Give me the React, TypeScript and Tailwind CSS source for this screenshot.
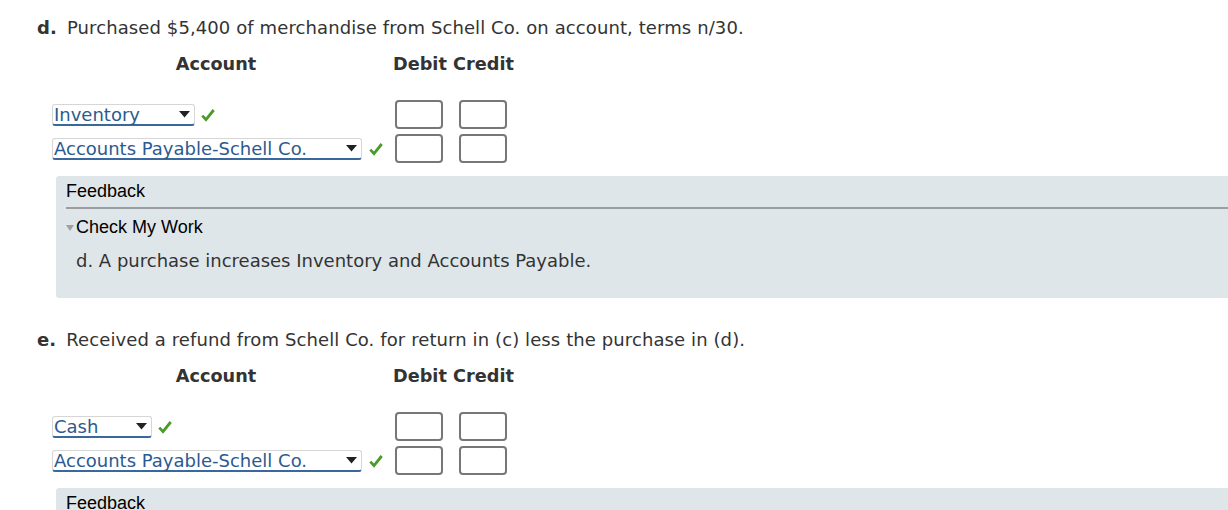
import React from "react";

const verdana = { fontFamily: '"DejaVu Sans", Verdana, sans-serif' };
const arial = { fontFamily: '"Liberation Sans", Arial, sans-serif' };

function Check() {
  return (
    <svg width="14" height="14" viewBox="0 0 14 14" className="shrink-0">
      <path d="M1.3 7.6 L5 11.6 L12.7 2" fill="none" stroke="#4c9a2a" strokeWidth="2.8" />
    </svg>
  );
}

function Select({ label, width }: { label: string; width: number }) {
  return (
    <div
      className="flex items-center justify-between h-[22px] border border-[#d6d6d6] border-b-2 border-b-[#3a679c] rounded-[3px] pl-[1px] pr-[4px] text-[#2c5a8f] text-[18px] leading-none"
      style={{ width }}
    >
      <span className="whitespace-nowrap mt-[1px]">{label}</span>
      <svg width="11" height="7" viewBox="0 0 11 7">
        <path d="M0 0 H11 L5.5 6.5 Z" fill="#222" />
      </svg>
    </div>
  );
}

function Box() {
  return <div className="w-[48px] h-[29px] border-2 border-[#777] rounded-[4px] bg-white" />;
}

function Row({ label, width, checkGap }: { label: string; width: number; checkGap: number }) {
  return (
    <div className="flex items-center h-[29px]">
      <div className="w-[343px] flex items-center">
        <Select label={label} width={width} />
        <div style={{ marginLeft: checkGap }}>
          <Check />
        </div>
      </div>
      <div className="flex gap-[16px]">
        <Box />
        <Box />
      </div>
    </div>
  );
}

function Section({
  letter,
  title,
  rows,
  feedback,
}: {
  letter: string;
  title: string;
  rows: { label: string; width: number; checkGap: number }[];
  feedback?: string;
}) {
  return (
    <div>
      <div
        className="mt-[1px] pl-[37px] h-[24px] leading-[24px] text-[18px] tracking-[0.1px] text-[#333] whitespace-nowrap"
        style={verdana}
      >
        <span className="font-bold">{letter}.</span>
        <span className="ml-[10px]">{title}</span>
      </div>
      <div className="flex mt-[12px] h-[24px] leading-[24px] text-[17.7px] font-bold text-[#333]" style={verdana}>
        <div className="w-[328px] ml-[52px] text-center">Account</div>
        <div className="ml-[13px]">Debit Credit</div>
      </div>
      <div className="ml-[52px] mt-[24px] flex flex-col gap-[5px]" style={verdana}>
        {rows.map((r) => (
          <Row key={r.label + r.width} {...r} />
        ))}
      </div>
      <div className="ml-[56px] mt-[13px] bg-[#dfe6e9] rounded-l-[3px] h-[122px] pt-[2px] text-black">
        <div
          className="ml-[10px] h-[31px] leading-[26px] text-[18px] border-b-2 border-b-[#9a9ea1]"
          style={arial}
        >
          Feedback
        </div>
        {feedback && (
          <>
            <div className="ml-[10px] mt-[6px] flex items-center h-[24px] text-[18px]" style={arial}>
              <svg width="8" height="6" viewBox="0 0 8 6" className="mr-[2px] mt-[1px]">
                <path d="M0 0 H8 L4 6 Z" fill="#a0a0a0" />
              </svg>
              <span>Check My Work</span>
            </div>
            <div
              className="ml-[20px] mt-[10px] h-[24px] leading-[24px] text-[18px] text-[#333] whitespace-nowrap"
              style={verdana}
            >
              {feedback}
            </div>
          </>
        )}
      </div>
    </div>
  );
}

export default function App() {
  return (
    <div className="w-[1228px] h-[510px] overflow-hidden bg-white pt-[15px]">
      <Section
        letter="d"
        title="Purchased $5,400 of merchandise from Schell Co. on account, terms n/30."
        rows={[
          { label: "Inventory", width: 143, checkGap: 6 },
          { label: "Accounts Payable-Schell Co.", width: 310, checkGap: 7 },
        ]}
        feedback="d. A purchase increases Inventory and Accounts Payable."
      />
      <div className="h-[29px]" />
      <Section
        letter="e"
        title="Received a refund from Schell Co. for return in (c) less the purchase in (d)."
        rows={[
          { label: "Cash", width: 100, checkGap: 6 },
          { label: "Accounts Payable-Schell Co.", width: 310, checkGap: 7 },
        ]}
      />
    </div>
  );
}
